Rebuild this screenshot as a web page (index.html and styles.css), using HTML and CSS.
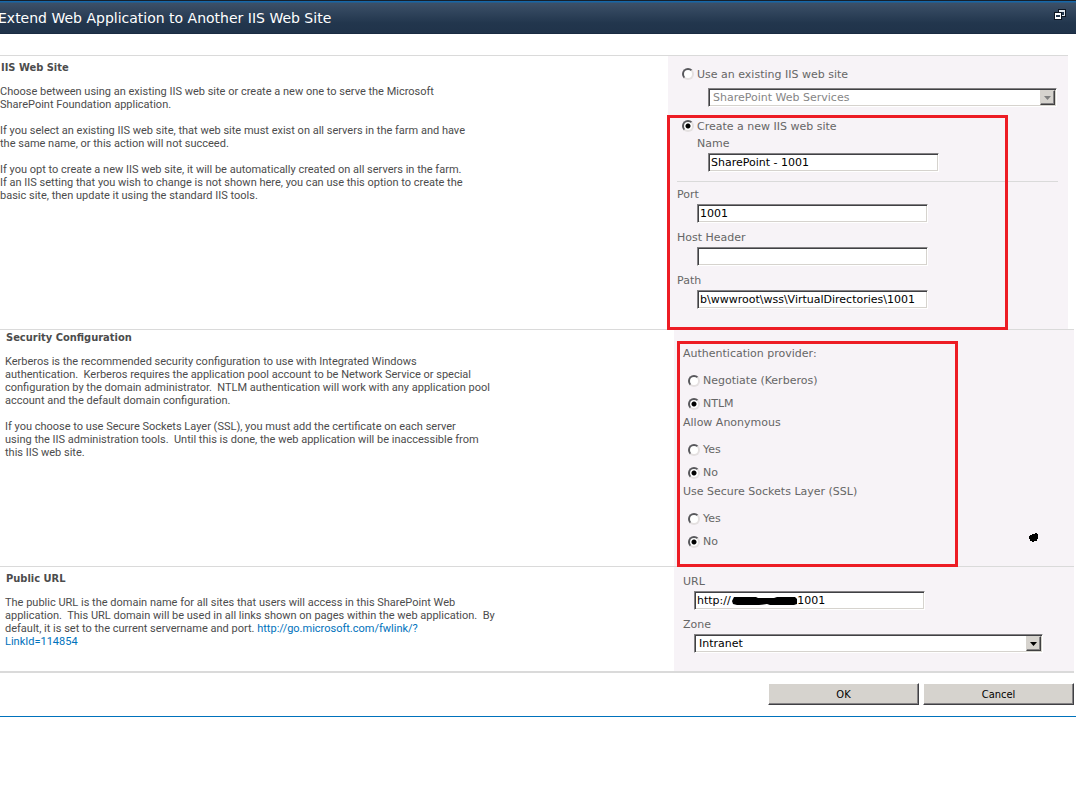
FILE: index.html
```html
<!DOCTYPE html>
<html lang="en">
<head>
<meta charset="utf-8">
<title>Extend Web Application to Another IIS Web Site</title>
<link rel="stylesheet" href="styles.css">
</head>
<body>
<header class="titlebar">
  <h1 class="title">Extend Web Application to Another IIS Web Site</h1>
  <button class="restore" type="button" aria-label="Restore">
    <svg width="12" height="12" viewBox="0 0 12 12" shape-rendering="crispEdges">
      <path d="M4 0h8v8H4z" fill="#0b1420"/>
      <path d="M5 1h6v6H5z" fill="#dfe5ec"/>
      <path d="M6 3h4v3H6z" fill="#22364d"/>
      <path d="M0 3h8v8H0z" fill="#0b1420"/>
      <path d="M1 4h6v6H1z" fill="#fff"/>
      <path d="M2 6h4v2H2z" fill="#22364d"/>
    </svg>
  </button>
</header>
<form class="form">
  <section class="section section-first">
    <div class="info">
      <h2 class="heading">IIS Web Site</h2>
      <p class="text">Choose between using an existing IIS web site or create a new one to serve the Microsoft<br>SharePoint Foundation application.</p>
      <p class="text">If you select an existing IIS web site, that web site must exist on all servers in the farm and have<br>the same name, or this action will not succeed.</p>
      <p class="text">If you opt to create a new IIS web site, it will be automatically created on all servers in the farm.<br>If an IIS setting that you wish to change is not shown here, you can use this option to create the<br>basic site, then update it using the standard IIS tools.</p>
    </div>
    <div class="panel panel-site">
      <div class="choice">
        <label class="option"><input class="radio" type="radio" name="site">Use an existing IIS web site</label>
        <span class="select-wrap nested">
          <select class="select" aria-label="Existing IIS web site" disabled><option>SharePoint Web Services</option></select>
          <span class="arrow arrow-off"><svg width="7" height="4" viewBox="0 0 7 4"><path d="M0 0h7L3.500 4z" fill="currentColor"/></svg></span>
        </span>
      </div>
      <div class="choice">
        <label class="option"><input class="radio" type="radio" name="site" checked>Create a new IIS web site</label>
        <label class="label indent" for="name">Name</label>
        <input class="input nested" id="name" type="text" value="SharePoint - 1001">
      </div>
      <hr class="rule">
      <div class="field"><label class="label" for="port">Port</label><input class="input" id="port" type="text" value="1001"></div>
      <div class="field"><label class="label" for="host">Host Header</label><input class="input" id="host" type="text"></div>
      <div class="field"><label class="label" for="path">Path</label><input class="input" id="path" type="text" value="b\wwwroot\wss\VirtualDirectories\1001"></div>
      <div class="mark mark-site"></div>
    </div>
  </section>

  <section class="section">
    <div class="info info-security">
      <h2 class="heading">Security Configuration</h2>
      <p class="text">Kerberos is the recommended security configuration to use with Integrated Windows<br>authentication.&nbsp; Kerberos requires the application pool account to be Network Service or special<br>configuration by the domain administrator.&nbsp; NTLM authentication will work with any application pool<br>account and the default domain configuration.</p>
      <p class="text">If you choose to use Secure Sockets Layer (SSL), you must add the certificate on each server<br>using the IIS administration tools.&nbsp; Until this is done, the web application will be inaccessible from<br>this IIS web site.</p>
    </div>
    <div class="panel panel-security">
      <fieldset class="group">
        <legend class="legend">Authentication provider:</legend>
        <label class="option"><input class="radio" type="radio" name="auth">Negotiate (Kerberos)</label>
        <label class="option"><input class="radio" type="radio" name="auth" checked>NTLM</label>
      </fieldset>
      <fieldset class="group">
        <legend class="legend">Allow Anonymous</legend>
        <label class="option"><input class="radio" type="radio" name="anon">Yes</label>
        <label class="option"><input class="radio" type="radio" name="anon" checked>No</label>
      </fieldset>
      <fieldset class="group">
        <legend class="legend">Use Secure Sockets Layer (SSL)</legend>
        <label class="option"><input class="radio" type="radio" name="ssl">Yes</label>
        <label class="option"><input class="radio" type="radio" name="ssl" checked>No</label>
      </fieldset>
      <div class="mark mark-security"></div>
      <svg class="blot" width="10" height="10" viewBox="0 0 10 10"><path d="M3 1h3V0h2v1h1v5H8v2H5v1H3V8H1V6H0V3h1V2h2z"/></svg>
    </div>
  </section>

  <section class="section">
    <div class="info info-url">
      <h2 class="heading">Public URL</h2>
      <p class="text">The public URL is the domain name for all sites that users will access in this SharePoint Web<br>application.&nbsp; This URL domain will be used in all links shown on pages within the web application.&nbsp; By<br>default, it is set to the current servername and port. <a class="link" href="http://go.microsoft.com/fwlink/?LinkId=114854">http://go.microsoft.com/fwlink/?<br>LinkId=114854</a></p>
    </div>
    <div class="panel panel-url">
      <div class="field">
        <label class="label" for="url">URL</label>
        <input class="input" id="url" type="text" value="http://&nbsp;&nbsp;&nbsp;&nbsp;&nbsp;&nbsp;&nbsp;&nbsp;&nbsp;&nbsp;&nbsp;&nbsp;&nbsp;&nbsp;&nbsp;&nbsp;&nbsp;&nbsp;:1001">
        <svg class="scribble" width="67" height="10" viewBox="0 0 67 10"><path d="M0 5l2-4h22l2 1h16l3-1h18l2 2v5l-3 1H38l-3-1-8 1H5L1 8z"/></svg>
      </div>
      <div class="field">
        <label class="label" for="zone">Zone</label>
        <span class="select-wrap">
          <select class="select" id="zone"><option>Intranet</option></select>
          <span class="arrow"><svg width="7" height="4" viewBox="0 0 7 4"><path d="M0 0h7L3.500 4z" fill="currentColor"/></svg></span>
        </span>
      </div>
    </div>
  </section>

  <footer class="actions">
    <button class="button" type="button">OK</button>
    <button class="button" type="button">Cancel</button>
  </footer>
</form>
</body>
</html>
```

FILE: styles.css
```css
* { box-sizing: border-box; }

body {
  margin: 0;
  background: #fff;
  color: #4c4c4c;
  font: 11px/13px Roboto, Tahoma, sans-serif;
}

.titlebar {
  display: flex;
  align-items: center;
  justify-content: space-between;
  height: 34px;
  padding: 0 10px 0 0;
  border-top: 1px solid #16202b;
  background: linear-gradient(#1667a8 0 1px, #3c5068 2px, #22364d 22px, #20334a 32px, #14243a);
}
.title {
  margin: 0 0 0 -2px;
  color: #fff;
  font: 14px/18px "DejaVu Sans", Verdana, sans-serif;
}
.restore {
  display: flex;
  align-items: flex-start;
  width: 12px;
  height: 18px;
  padding: 0;
  border: 0;
  background: none;
}

.form {
  padding-top: 21px;
  border-bottom: 1px solid #0072bc;
}
.section {
  display: flex;
  margin-right: 2px;
  border-top: 1px solid #dadada;
}
.section-first { margin-right: 8px; }

.info { flex: 1; padding-top: 5px; }
.info-security { padding: 1px 0 0 5px; }
.info-url { padding-left: 5px; }
.heading {
  margin: 0 0 11px 1px;
  font: bold 11px/13px "DejaVu Sans Condensed", Tahoma, sans-serif;
}
.text { margin: 0 0 13px; white-space: nowrap; }
.link { color: #0072bc; text-decoration: none; }

.panel {
  position: relative;
  flex: none;
  width: 400px;
  background: #f7f3f7;
  color: #666;
  font: 11px/15px "DejaVu Sans", Verdana, sans-serif;
}
.panel-site { padding: 10px 10px 20px 9px; }
.panel-security { padding: 16px 9px 13px; }
.panel-url { padding: 7px 9px 18px; }

.option { display: flex; align-items: center; gap: 3px; }
.panel-site .option { padding-left: 5px; height: 16px; }
.panel-security .option { padding-left: 5px; height: 23px; }
.label { display: block; }
.indent { margin: 2px 0 2px 20px; }
.choice { display: flex; flex-direction: column; }
.choice + .choice { margin-top: 11px; }
.nested { margin-left: 31px; }
.choice .select-wrap { width: 349px; margin-top: 6px; }

.radio {
  appearance: none;
  flex: none;
  width: 12px;
  height: 12px;
  margin: 0;
  border: 2px solid;
  border-color: #58585c #e4e0e0 #e4e0e0 #58585c;
  border-radius: 50%;
  background: #fff;
}
.radio:checked { background: radial-gradient(circle, #000 0 2px, #fff 3px); }

.rule {
  height: 1px;
  margin: 9px 0 5px;
  border: 0;
  background: #dadada;
}

.field { position: relative; display: flex; flex-direction: column; }
.field + .field { margin-top: 7px; }
.field .input { margin: 2px 0 0 20px; }
.panel-url .input { margin-left: 11px; }
.panel-url .select-wrap { width: 349px; margin: 2px 0 0 11px; }

.input, .select {
  height: 19px;
  padding: 1px 2px;
  border: 1px solid;
  border-color: #848284 #fff #fff #848284;
  border-radius: 0;
  background: #fff;
  box-shadow: inset 1px 1px #404044, inset -1px -1px #d6d3ce;
  color: #000;
  font: 11px/15px "DejaVu Sans", Verdana, sans-serif;
}
.input { width: 231px; }
.select {
  appearance: none;
  display: block;
  width: 100%;
  padding-left: 4px;
}
.select:disabled { color: #858585; opacity: 1; }
.select-wrap { position: relative; display: block; }
.arrow {
  position: absolute;
  top: 2px;
  right: 2px;
  display: flex;
  align-items: center;
  justify-content: center;
  width: 15px;
  height: 15px;
  border: 1px solid;
  border-color: #d6d3ce #404040 #404040 #d6d3ce;
  background: #d6d3ce;
  box-shadow: inset -1px -1px #848284;
  color: #000;
  pointer-events: none;
}
.arrow-off { color: #808080; }

.group { margin: 0; padding: 0; border: 0; }
.legend { padding: 0; margin-bottom: 8px; }

/* Annotations drawn over the form */
.mark { position: absolute; border: 3px solid #ed1c24; pointer-events: none; }
.mark-site { inset: 59px 60px -1px -1px; }
.mark-security { inset: 11px 116px -1px 3px; }
.blot { position: absolute; top: 203px; right: 35px; }
.scribble { position: absolute; left: 49px; top: 22px; }

.actions {
  display: flex;
  justify-content: flex-end;
  gap: 4px;
  margin-right: 2px;
  padding: 10px 0 11px;
  border-top: 2px solid #dadada;
}
.button {
  width: 151px;
  height: 22px;
  padding: 0;
  border: 1px solid;
  border-color: #fff #404044 #404044 #fff;
  border-radius: 0;
  background: #d6d3ce;
  box-shadow: inset -1px -1px #848284;
  color: #000;
  font: 11px/13px "DejaVu Sans Condensed", Tahoma, sans-serif;
}
```
